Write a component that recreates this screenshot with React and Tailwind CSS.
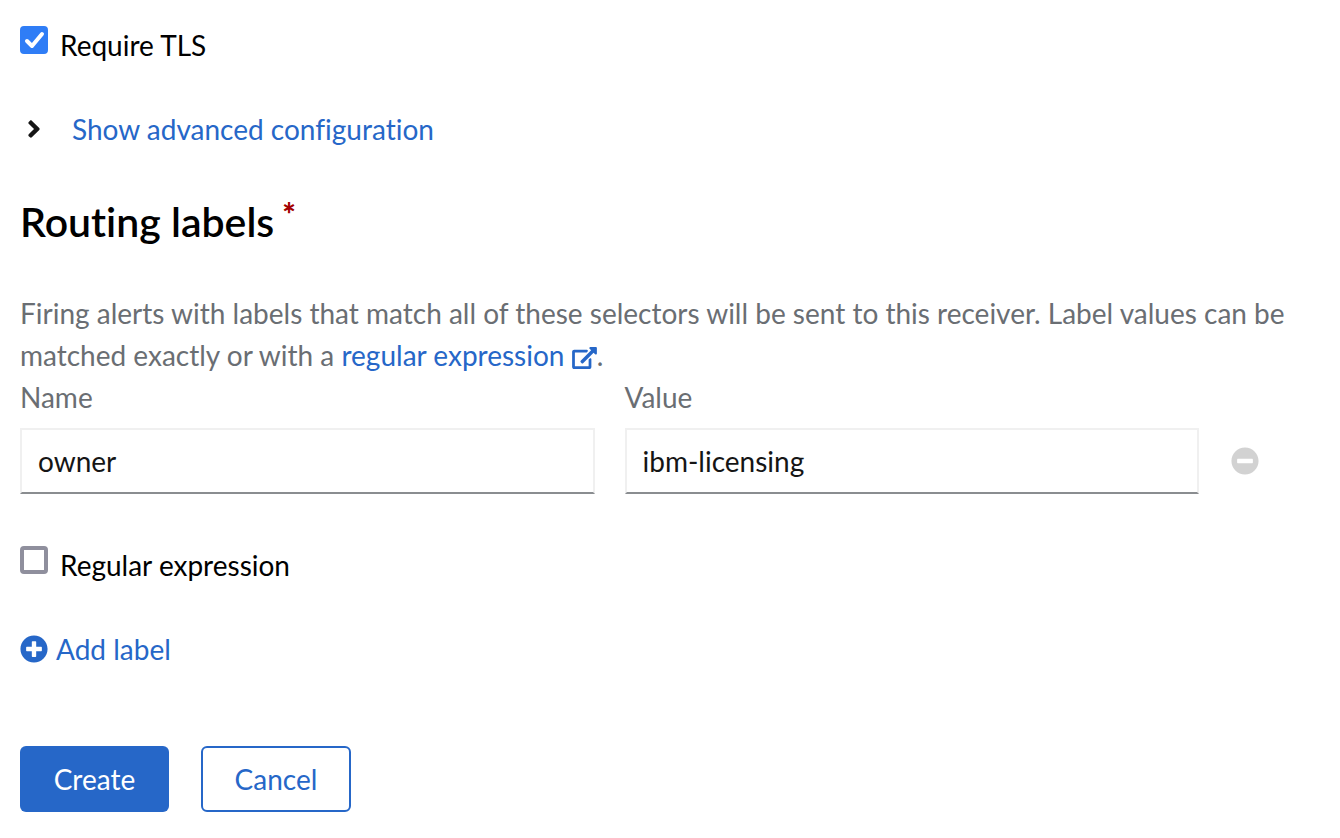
import { useState } from 'react';
import { FaAngleRight, FaMinusCircle, FaPlusCircle } from 'react-icons/fa';

function ExternalLinkIcon({ className }) {
  return (
    <svg viewBox="0 0 576 512" fill="currentColor" aria-hidden="true" className={className}>
      <path d="M576 24v127.984c0 21.461-25.96 31.98-40.971 16.971l-35.707-35.709-243.523 243.523c-9.373 9.373-24.568 9.373-33.941 0l-22.627-22.627c-9.373-9.373-9.373-24.569 0-33.941L442.756 76.676l-35.703-35.705C391.982 25.9 402.656 0 424.024 0H552c13.255 0 24 10.745 24 24zM407.029 270.794l-16 16A23.999 23.999 0 0 0 384 303.765V448H64V128h264a24.003 24.003 0 0 0 16.97-7.029l16-16C376.089 89.851 365.381 64 344 64H48C21.49 64 0 85.49 0 112v352c0 26.51 21.49 48 48 48h352c26.51 0 48-21.49 48-48V287.764c0-21.382-25.852-32.09-40.971-16.97z" />
    </svg>
  );
}

function Checkbox({ id, label, checked, onChange }) {
  return (
    <div className="flex items-start gap-3">
      <span className="relative flex mt-1 size-7 shrink-0">
        <input
          id={id}
          type="checkbox"
          checked={checked}
          onChange={(e) => onChange(e.target.checked)}
          className="size-7 appearance-none rounded-sm border-4 border-[#8f8f9d] bg-white checked:border-[#2f7df6] checked:bg-[#2f7df6]"
        />
        {checked && (
          <svg viewBox="0 0 28 28" className="pointer-events-none absolute inset-0 size-7" fill="none" stroke="#fff" strokeWidth="4" strokeLinecap="round" strokeLinejoin="round">
            <path d="M7 15l5 5L22 8" />
          </svg>
        )}
      </span>
      <label htmlFor={id} className="pt-0.5 leading-[42px] text-black">{label}</label>
    </div>
  );
}

function TextField({ id, label, value, onChange }) {
  return (
    <div className="flex min-w-0 flex-1 flex-col gap-2.5">
      <label htmlFor={id} className="leading-[42px]">{label}</label>
      <input
        id={id}
        type="text"
        value={value}
        onChange={(e) => onChange(e.target.value)}
        className="h-[66px] w-full border-2 border-[#f0f0f0] border-b-[#8a8d90] bg-white px-4 text-[#151515] outline-none"
      />
    </div>
  );
}

export default function App() {
  const [requireTls, setRequireTls] = useState(true);
  const [regex, setRegex] = useState(false);
  const [name, setName] = useState('owner');
  const [value, setValue] = useState('ibm-licensing');

  return (
    <form
      onSubmit={(e) => e.preventDefault()}
      className="bg-white px-5 pt-[22px] pb-6 font-['Lato',sans-serif] text-[28px] leading-[42px] text-[#6a6e73] [font-variant-ligatures:none]"
    >
      <Checkbox id="require-tls" label="Require TLS" checked={requireTls} onChange={setRequireTls} />

      <button type="button" className="mt-[42px] flex items-center text-[#2667c8]">
        <FaAngleRight className="size-7 text-[#151515]" />
        <span className="ml-6">Show advanced configuration</span>
      </button>

      <h2 className="mt-12 flex items-start gap-2 text-[41px] leading-[48px] font-semibold text-black">
        Routing labels
        <span className="text-[32px] leading-8 font-black text-[#a30000]" aria-hidden="true">*</span>
      </h2>

      <p className="mt-[46px]">
        Firing alerts with labels that match all of these selectors will be sent to this receiver. Label values can be
        matched exactly or with a{' '}
        <a href="#regex" className="text-[#2667c8]">
          regular expression <ExternalLinkIcon className="inline h-[22px] w-[25px] align-[-3px]" />
        </a>
        .
      </p>

      <div className="flex items-end gap-[30px]">
        <TextField id="label-name" label="Name" value={name} onChange={setName} />
        <TextField id="label-value" label="Value" value={value} onChange={setValue} />
        <div className="flex h-[66px] w-[91px] items-center">
          <button type="button" aria-label="Remove label" disabled className="ml-0.5 text-[#d2d2d2]">
            <FaMinusCircle className="size-7" />
          </button>
        </div>
      </div>

      <div className="mt-12">
        <Checkbox id="regex" label="Regular expression" checked={regex} onChange={setRegex} />
      </div>

      <button type="button" className="mt-[42px] flex items-center gap-2 text-[#2667c8]">
        <FaPlusCircle className="size-7" />
        Add label
      </button>

      <div className="mt-[76px] flex gap-8">
        <button type="submit" className="h-[66px] min-w-[149px] rounded-md bg-[#2667c8] px-8 text-white">Create</button>
        <button type="button" className="h-[66px] min-w-[150px] rounded-md border-2 border-[#2667c8] px-[30px] text-[#2667c8]">Cancel</button>
      </div>
    </form>
  );
}
